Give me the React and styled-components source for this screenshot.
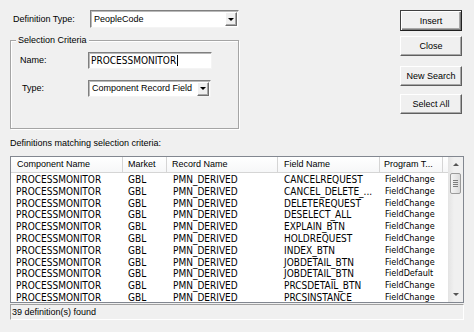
import React from 'react';
import styled, { createGlobalStyle } from 'styled-components';

const GlobalStyle = createGlobalStyle`
  html, body { margin: 0; padding: 0; background: #f0f0f0; }
  body {
    font-family: "Liberation Sans", Arial, sans-serif;
    font-size: 9px;
    color: #000;
  }
  * { box-sizing: border-box; }
`;

const Dialog = styled.div`
  width: 474px;
  height: 332px;
  padding: 10px 10px 0 10px;
  display: flex;
  flex-direction: column;
  overflow: hidden;
  background: #f0f0f0;
`;

const TopArea = styled.div`
  display: flex;
  justify-content: space-between;
  align-items: flex-start;
`;

const LeftPane = styled.div`
  width: 229px;
  display: flex;
  flex-direction: column;
`;

const FormRow = styled.div`
  display: flex;
  align-items: center;
  height: ${p => p.$h || 17}px;
  margin-top: ${p => p.$mt || 0}px;
`;

const Label = styled.span`
  width: ${p => p.$w}px;
  padding-left: ${p => p.$pl || 0}px;
  line-height: 11px;
  white-space: nowrap;
`;

const Sunken = styled.div`
  width: ${p => p.$w}px;
  height: 100%;
  background: #fff;
  border-top: 1px solid #7f7f7f;
  border-left: 1px solid #7f7f7f;
  border-bottom: 1px solid #f4f4f4;
  border-right: 1px solid #f4f4f4;
  box-shadow: inset 1px 1px 0 #b9b9b9;
  display: flex;
  align-items: center;
  padding: 0 1px 0 ${p => p.$pl || 3}px;
  white-space: nowrap;
  overflow: hidden;
`;

const ComboText = styled.span`
  flex: 1;
  line-height: 11px;
`;

const NarrowText = styled.span`
  font-family: "DejaVu Sans Condensed", "Liberation Sans", sans-serif;
  font-size: 10px;
  line-height: 12px;
`;

const Caret = styled.span`
  display: inline-block;
  width: 1px;
  height: 11px;
  background: #000;
  margin-left: 1px;
  vertical-align: -2px;
`;

const DropButton = styled.div`
  width: 12px;
  height: 14px;
  background: #f0f0f0;
  border-top: 1px solid #fff;
  border-left: 1px solid #fff;
  border-bottom: 1px solid #6f6f6f;
  border-right: 1px solid #6f6f6f;
  box-shadow: inset -1px -1px 0 #a8a8a8;
  display: flex;
  align-items: center;
  justify-content: center;
`;

const ArrowDown = styled.span`
  width: 0;
  height: 0;
  border-left: 3px solid transparent;
  border-right: 3px solid transparent;
  border-top: 3px solid ${p => p.$c || '#000'};
`;

const ArrowUp = styled.span`
  width: 0;
  height: 0;
  border-left: 3px solid transparent;
  border-right: 3px solid transparent;
  border-bottom: 3px solid ${p => p.$c || '#000'};
`;

const Group = styled.div`
  position: relative;
  margin-top: 12px;
  height: 89px;
  border: 1px solid #a5a5a5;
  box-shadow: inset 1px 1px 0 #fff, 1px 1px 0 #fff;
  padding: 11px 0 0 9px;
`;

const Legend = styled.span`
  position: absolute;
  top: -6px;
  left: 5px;
  padding: 0 2px;
  background: #f0f0f0;
  line-height: 11px;
`;

const ButtonCol = styled.div`
  width: 62px;
  margin-right: 2px;
  display: flex;
  flex-direction: column;
`;

const Button = styled.button`
  width: 62px;
  height: ${p => (p.$default ? 21 : 20)}px;
  margin-top: ${p => p.$mt || 0}px;
  font-family: "Liberation Sans", Arial, sans-serif;
  font-size: 9px;
  color: #000;
  background: #f0f0f0;
  padding: 0;
  border-top: 1px solid ${p => (p.$default ? '#404040' : '#fff')};
  border-left: 1px solid ${p => (p.$default ? '#404040' : '#fff')};
  border-bottom: 1px solid ${p => (p.$default ? '#202020' : '#5f5f5f')};
  border-right: 1px solid ${p => (p.$default ? '#202020' : '#5f5f5f')};
  box-shadow: ${p =>
    p.$default
      ? 'inset 1px 1px 0 #fff, inset -1px -1px 0 #7a7a7a, inset -2px -2px 0 #a8a8a8'
      : 'inset -1px -1px 0 #a8a8a8'};
`;

const SectionLabel = styled.div`
  margin-top: 9px;
  line-height: 11px;
`;

const ListBox = styled.div`
  margin-top: 7px;
  height: 147px;
  display: flex;
  background: #fff;
  border: 1px solid #828790;
`;

const TableArea = styled.div`
  flex: 1;
  overflow: hidden;
  display: flex;
  flex-direction: column;
`;

const COLS = '112px 44px 111px 102px 63px 1fr';

const HeaderRow = styled.div`
  display: grid;
  grid-template-columns: ${COLS};
  height: 16px;
  flex-shrink: 0;
`;

const HeaderCell = styled.div`
  padding-left: ${p => p.$pl || 5}px;
  line-height: 15px;
  white-space: nowrap;
  overflow: hidden;
  background: linear-gradient(#ffffff, #f6f7f8);
  border-bottom: 1px solid #d5d5d5;
  border-right: ${p => (p.$last ? 'none' : '1px solid #d5d5d5')};
`;

const Rows = styled.div`
  padding-top: 1px;
`;

const Row = styled.div`
  display: grid;
  grid-template-columns: ${COLS};
  height: 11.8px;
`;

const Cell = styled.div`
  padding-left: ${p => p.$pl || 5}px;
  white-space: nowrap;
  font-family: "DejaVu Sans Condensed", "Liberation Sans", sans-serif;
  font-size: ${p => (p.$small ? 9 : 10)}px;
  line-height: 11.8px;
`;

const Scrollbar = styled.div`
  width: 15px;
  display: flex;
  flex-direction: column;
  background: linear-gradient(to right, #e3e3e3, #f0f0f0 40%, #f0f0f0);
`;

const ScrollArrow = styled.div`
  height: 15px;
  flex-shrink: 0;
  display: flex;
  align-items: center;
  justify-content: center;
`;

const Track = styled.div`
  flex: 1;
  padding: 1px 2px 0 2px;
`;

const Thumb = styled.div`
  height: 21px;
  border: 1px solid #9b9b9b;
  border-radius: 2px;
  background: linear-gradient(to right, #f4f4f4, #e6e6e6 60%, #dadada);
  display: flex;
  align-items: center;
  justify-content: center;
`;

const StatusBar = styled.div`
  margin-top: 1px;
  height: 16px;
  border-top: 1px solid #a0a0a0;
  border-left: 1px solid #a0a0a0;
  border-bottom: 1px solid #fff;
  border-right: 1px solid #fff;
  padding-left: 1px;
  line-height: 14px;
`;

const rows = [
  ['CANCELREQUEST', 'FieldChange'],
  ['CANCEL_DELETE_...', 'FieldChange'],
  ['DELETEREQUEST', 'FieldChange'],
  ['DESELECT_ALL', 'FieldChange'],
  ['EXPLAIN_BTN', 'FieldChange'],
  ['HOLDREQUEST', 'FieldChange'],
  ['INDEX_BTN', 'FieldChange'],
  ['JOBDETAIL_BTN', 'FieldChange'],
  ['JOBDETAIL_BTN', 'FieldDefault'],
  ['PRCSDETAIL_BTN', 'FieldChange'],
  ['PRCSINSTANCE', 'FieldChange'],
];

function Grip() {
  return (
    <svg width="5" height="7" viewBox="0 0 5 7">
      {[0, 2, 4, 6].map(y => (
        <rect key={y} x="0" y={y} width="5" height="1" fill="#7d7d7d" />
      ))}
    </svg>
  );
}

export default function App() {
  return (
    <>
      <GlobalStyle />
      <Dialog>
        <TopArea>
          <LeftPane>
            <FormRow $h={18}>
              <Label $w={80} $pl={3}>Definition Type:</Label>
              <Sunken $w={149}>
                <ComboText>PeopleCode</ComboText>
                <DropButton><ArrowDown /></DropButton>
              </Sunken>
            </FormRow>
            <Group>
              <Legend>Selection Criteria</Legend>
              <FormRow>
                <Label $w={68}>Name:</Label>
                <Sunken $w={124} $pl={2}>
                  <NarrowText>PROCESSMONITOR<Caret /></NarrowText>
                </Sunken>
              </FormRow>
              <FormRow $mt={11}>
                <Label $w={68} $pl={2}>Type:</Label>
                <Sunken $w={123} $pl={3}>
                  <ComboText>Component Record Field</ComboText>
                  <DropButton><ArrowDown /></DropButton>
                </Sunken>
              </FormRow>
            </Group>
          </LeftPane>
          <ButtonCol>
            <Button $default>Insert</Button>
            <Button $mt={5}>Close</Button>
            <Button $mt={10}>New Search</Button>
            <Button $mt={8}>Select All</Button>
          </ButtonCol>
        </TopArea>
        <SectionLabel>Definitions matching selection criteria:</SectionLabel>
        <ListBox>
          <TableArea>
            <HeaderRow>
              <HeaderCell $pl={6}>Component Name</HeaderCell>
              <HeaderCell>Market</HeaderCell>
              <HeaderCell>Record Name</HeaderCell>
              <HeaderCell $pl={6}>Field Name</HeaderCell>
              <HeaderCell $pl={4}>Program T...</HeaderCell>
              <HeaderCell $last />
            </HeaderRow>
            <Rows>
              {rows.map(([field, prog], i) => (
                <Row key={i}>
                  <Cell>PROCESSMONITOR</Cell>
                  <Cell>GBL</Cell>
                  <Cell $pl={6}>PMN_DERIVED</Cell>
                  <Cell $pl={6}>{field}</Cell>
                  <Cell $small>{prog}</Cell>
                  <Cell />
                </Row>
              ))}
            </Rows>
          </TableArea>
          <Scrollbar>
            <ScrollArrow><ArrowUp $c="#555" /></ScrollArrow>
            <Track>
              <Thumb><Grip /></Thumb>
            </Track>
            <ScrollArrow><ArrowDown $c="#555" /></ScrollArrow>
          </Scrollbar>
        </ListBox>
        <StatusBar>39 definition(s) found</StatusBar>
      </Dialog>
    </>
  );
}
